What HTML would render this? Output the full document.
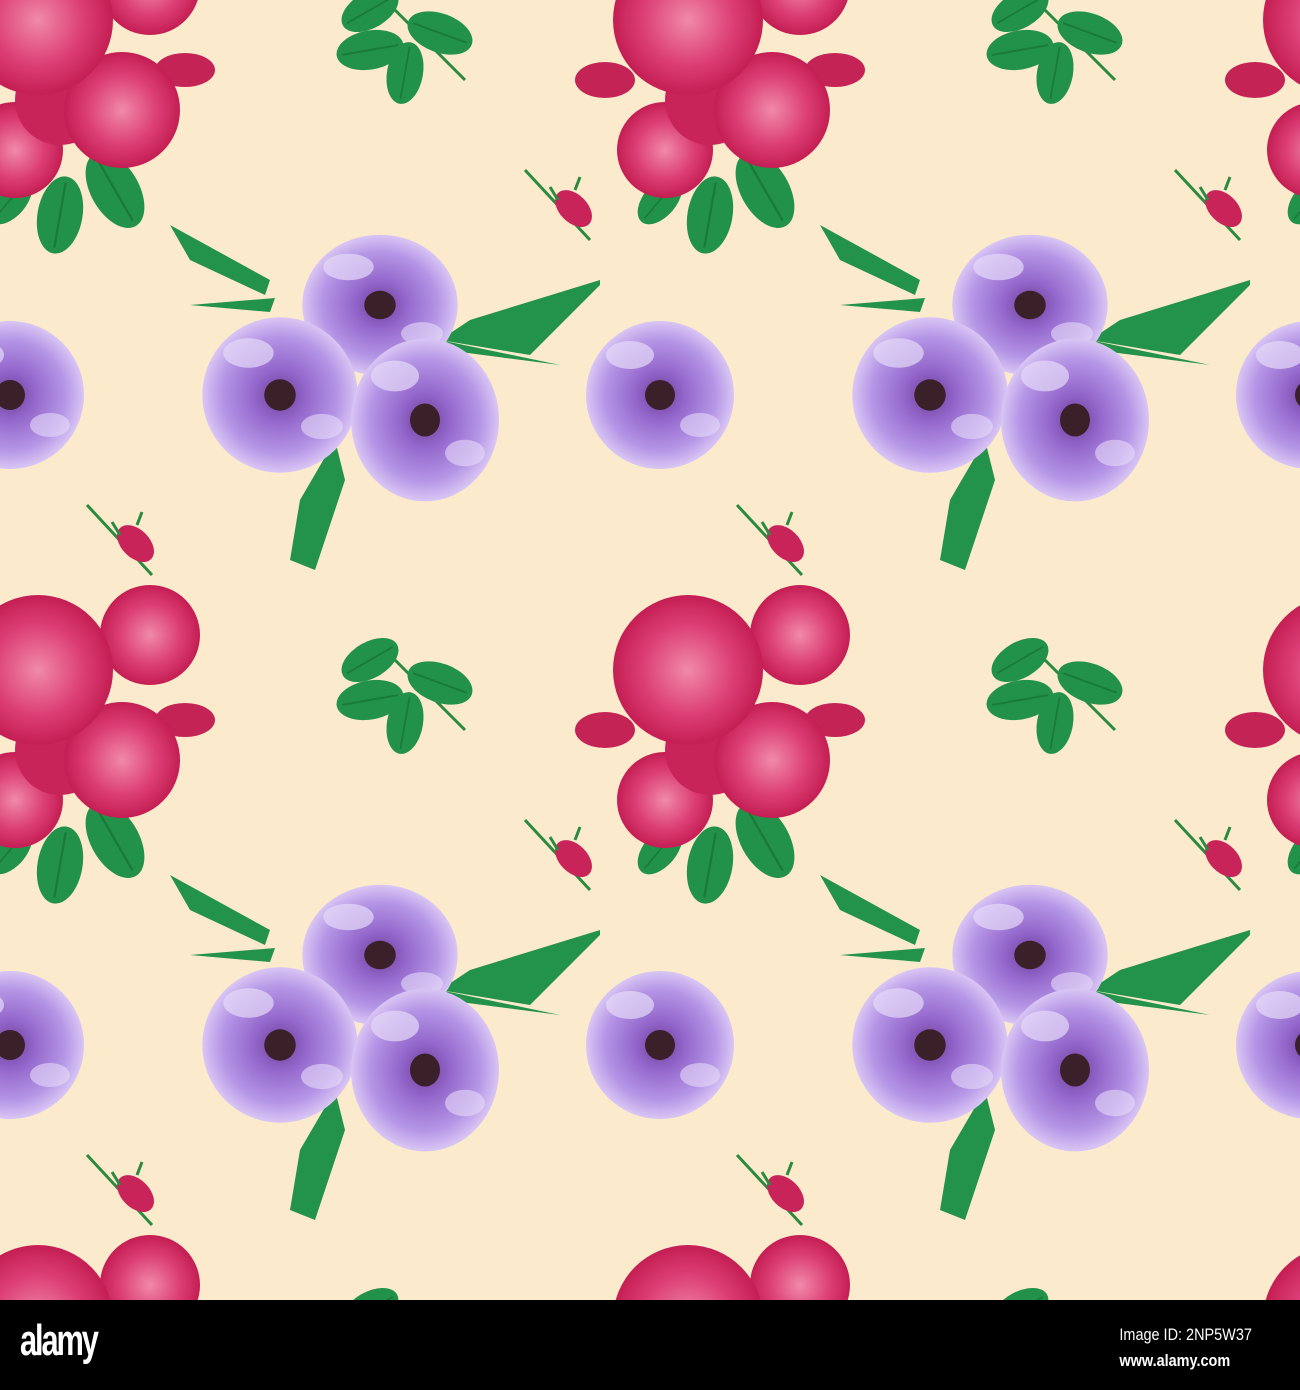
<!DOCTYPE html>
<html><head><meta charset="utf-8"><style>
html,body{margin:0;padding:0;width:1300px;height:1390px;overflow:hidden;background:#000}
svg{display:block;position:absolute;left:0;top:0}
.f{position:absolute;left:0;top:1300px;width:1300px;height:90px;background:#000;overflow:hidden}
.logo{position:absolute;left:20px;top:16px;color:#fff;font:bold 44px/50px "Liberation Sans",sans-serif;letter-spacing:-3px;transform:scaleX(0.7);transform-origin:left}
.id{position:absolute;right:48px;top:22px;color:#fff;font:17px/26px "Liberation Sans",sans-serif;transform:scaleX(0.85);transform-origin:right;white-space:nowrap}
</style></head><body>
<svg width="1300" height="1300" viewBox="0 0 1300 1300">
<defs>
<radialGradient id="rose" cx="50%" cy="50%" r="50%"><stop offset="0" stop-color="#f08aaa"/><stop offset="0.6" stop-color="#dc3f75"/><stop offset="1" stop-color="#c41e54"/></radialGradient>
<radialGradient id="an" cx="50%" cy="50%" r="50%"><stop offset="0" stop-color="#6e3e9c"/><stop offset="0.35" stop-color="#9468cc"/><stop offset="0.75" stop-color="#b596e6"/><stop offset="1" stop-color="#d9c6f4"/></radialGradient>
<g id="leaf"><ellipse cx="0" cy="0" rx="15" ry="26" fill="#22924a"/><line x1="0" y1="-22" x2="0" y2="22" stroke="#1a7a3a" stroke-width="1.5"/></g>
<g id="bud"><line x1="-45" y1="-35" x2="20" y2="35" stroke="#2a8a40" stroke-width="3"/><ellipse cx="0" cy="5" rx="14" ry="22" fill="#c8245a" transform="rotate(-45)"/><path d="M-12 -5 L-20 -18 M5 -15 L10 -28" stroke="#2a8a40" stroke-width="3"/></g>
<g id="anem"><circle r="74" fill="url(#an)"/><ellipse cx="-30" cy="-40" rx="24" ry="14" fill="#e6daf8" opacity="0.7"/><ellipse cx="40" cy="30" rx="20" ry="12" fill="#e6daf8" opacity="0.6"/><circle r="15" fill="#3a2028"/></g>
<g id="tile">
 <use href="#leaf" transform="translate(60,215) rotate(10) scale(1.5)"/>
 <use href="#leaf" transform="translate(115,190) rotate(-30) scale(1.6)"/>
 <use href="#leaf" transform="translate(10,200) rotate(40) scale(1.1)"/>
 <ellipse cx="-45" cy="80" rx="30" ry="18" fill="#c42356"/>
 <ellipse cx="185" cy="70" rx="30" ry="17" fill="#c42356"/>
 <circle cx="150" cy="-15" r="50" fill="url(#rose)"/>
 <circle cx="15" cy="150" r="48" fill="url(#rose)"/>
 <circle cx="60" cy="100" r="45" fill="#c8245a"/>
 <circle cx="122" cy="110" r="58" fill="url(#rose)"/>
 <circle cx="38" cy="20" r="75" fill="url(#rose)"/>
 <g transform="translate(400,45)">
  <line x1="-10" y1="-40" x2="65" y2="35" stroke="#2a8a40" stroke-width="3"/>
  <use href="#leaf" transform="translate(-30,-35) rotate(60) scale(1.2)"/>
  <use href="#leaf" transform="translate(-30,5) rotate(80) scale(1.3)"/>
  <use href="#leaf" transform="translate(40,-12) rotate(-70) scale(1.3)"/>
  <use href="#leaf" transform="translate(5,28) rotate(10) scale(1.2)"/>
 </g>
 <use href="#bud" transform="translate(570,205)"/>
 <use href="#bud" transform="translate(132,540)"/>
 <g fill="#23924a">
  <path d="M170 225 L270 280 L265 295 L190 260 Z"/>
  <path d="M190 305 L275 298 L270 312 Z"/>
  <path d="M600 280 L470 320 L440 340 L530 355 L600 285 Z"/>
  <path d="M440 340 L560 365 L445 350 Z"/>
  <path d="M335 440 L300 500 L290 560 L315 570 L345 480 Z"/>
 </g>
 <use href="#anem" transform="translate(380,305) scale(1.05,0.95)"/>
 <use href="#anem" transform="translate(280,395) scale(1.05,1.05)"/>
 <use href="#anem" transform="translate(425,420) scale(1,1.1)"/>
 <use href="#anem" transform="translate(10,395)"/>
</g>
</defs>
<rect width="1300" height="1300" fill="#fbeacc"/>
<use href="#tile" x="-650" y="-650"/><use href="#tile" x="0" y="-650"/><use href="#tile" x="650" y="-650"/><use href="#tile" x="1300" y="-650"/>
<use href="#tile" x="-650" y="0"/><use href="#tile" x="0" y="0"/><use href="#tile" x="650" y="0"/><use href="#tile" x="1300" y="0"/>
<use href="#tile" x="-650" y="650"/><use href="#tile" x="0" y="650"/><use href="#tile" x="650" y="650"/><use href="#tile" x="1300" y="650"/>
<use href="#tile" x="-650" y="1300"/><use href="#tile" x="0" y="1300"/><use href="#tile" x="650" y="1300"/><use href="#tile" x="1300" y="1300"/>
</svg>
<div class="f"><div class="logo">alamy</div><div class="id">Image ID: 2NP5W37<br><b>www.alamy.com</b></div></div>
</body></html>
